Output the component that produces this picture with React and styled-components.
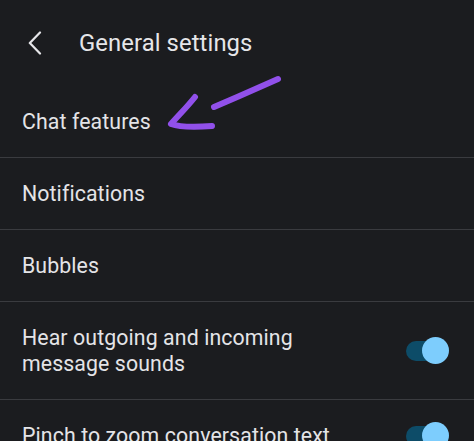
import React from "react";
import styled, { createGlobalStyle } from "styled-components";

const GlobalStyle = createGlobalStyle`
  html, body {
    margin: 0;
    padding: 0;
    background: #1b1c1f;
  }
  body {
    font-family: Roboto, "Noto Sans", "Liberation Sans", sans-serif;
    color: #e4e4e7;
    overflow: hidden;
  }
`;

const Screen = styled.div`
  position: relative;
  width: 474px;
  height: 441px;
  background: #1b1c1f;
  overflow: hidden;
`;

const Header = styled.div`
  display: flex;
  align-items: center;
  height: 86px;
  padding-left: 26px;
  gap: 35px;
  box-sizing: border-box;
`;

const BackButton = styled.div`
  display: flex;
  align-items: center;
  justify-content: center;
  width: 18px;
  height: 28px;
`;

const Title = styled.h1`
  margin: 0;
  font-size: 23.8px;
  font-weight: 400;
  color: #e6e6e9;
  letter-spacing: 0.1px;
`;

const List = styled.div`
  display: flex;
  flex-direction: column;
`;

const Row = styled.div`
  display: flex;
  align-items: center;
  justify-content: space-between;
  height: ${(p) => p.$h}px;
  padding: 0 26px 0 22px;
  box-sizing: border-box;
  border-top: ${(p) => (p.$first ? "none" : "1.5px solid #3a3b3f")};
`;

const Label = styled.div`
  font-size: 21.3px;
  line-height: 25.5px;
  color: #e4e4e7;
  letter-spacing: 0.1px;
  white-space: nowrap;
`;

const Track = styled.div`
  position: relative;
  flex: none;
  width: 42px;
  height: 20px;
  border-radius: 10px;
  background: #0d4c68;
`;

const Thumb = styled.div`
  position: absolute;
  right: -1px;
  top: 50%;
  width: 27px;
  height: 27px;
  margin-top: -13.5px;
  border-radius: 50%;
  background: #7dcdfd;
`;

const Scribble = styled.svg`
  position: absolute;
  left: 160px;
  top: 70px;
  width: 130px;
  height: 70px;
  pointer-events: none;
`;

const Toggle = () => (
  <Track>
    <Thumb />
  </Track>
);

const rows = [
  { label: "Chat features", h: 71, first: true },
  { label: "Notifications", h: 72 },
  { label: "Bubbles", h: 72 },
  { label: ["Hear outgoing and incoming", "message sounds"], h: 98, toggle: true },
  { label: "Pinch to zoom conversation text", h: 72, toggle: true },
];

export default function App() {
  return (
    <>
      <GlobalStyle />
      <Screen>
        <Header>
          <BackButton>
            <svg width="14" height="24" viewBox="0 0 14 24">
              <path
                d="M12 1.5 L1.8 12 L12 22.5"
                fill="none"
                stroke="#e6e6e9"
                strokeWidth="2.2"
                strokeLinecap="round"
                strokeLinejoin="round"
              />
            </svg>
          </BackButton>
          <Title>General settings</Title>
        </Header>
        <List>
          {rows.map((r, i) => (
            <Row key={i} $h={r.h} $first={r.first}>
              <Label>
                {Array.isArray(r.label)
                  ? r.label.map((l, j) => <div key={j}>{l}</div>)
                  : r.label}
              </Label>
              {r.toggle && <Toggle />}
            </Row>
          ))}
        </List>
        <Scribble viewBox="0 0 130 70">
          <path
            d="M118 9 C100 17, 75 28, 54 37"
            fill="none"
            stroke="#9150ea"
            strokeWidth="6"
            strokeLinecap="round"
          />
          <path
            d="M35 27 C28 36, 18 46, 11 54 C22 58, 38 57, 52 56"
            fill="none"
            stroke="#9150ea"
            strokeWidth="6"
            strokeLinecap="round"
            strokeLinejoin="round"
          />
        </Scribble>
      </Screen>
    </>
  );
}
